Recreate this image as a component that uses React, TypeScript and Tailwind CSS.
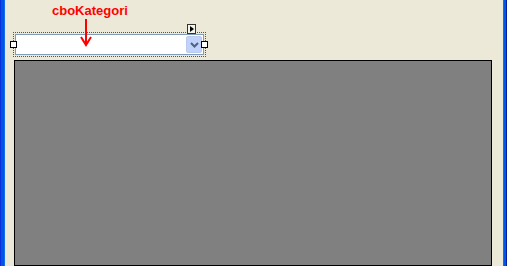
export default function App() {
  return (
    <div className="flex h-[266px] w-[507px] overflow-hidden" style={{ fontFamily: '"Liberation Sans", Arial, sans-serif' }}>
      <div className="flex h-full shrink-0">
        <div className="w-px bg-[#0831D9]" />
        <div className="w-[3px] bg-[#0055E5]" />
        <div className="w-px bg-[#166AEE]" />
      </div>
      <div className="relative flex flex-1 flex-col bg-[#ECE9D8]">
        <div className="ml-[8px] mt-[32px] relative h-[25px] w-[193px] border border-dotted border-[#555]">
          <div className="absolute left-[1px] top-[1px] h-[21px] w-[189px] border border-[#7F9DB9] bg-white">
            <div className="absolute right-[1px] top-[1px] flex h-[17px] w-[16px] items-center justify-center rounded-[2px] border border-[#B9C9EF] bg-[#C1D3FB]">
              <svg width="9" height="6" viewBox="0 0 9 6">
                <path d="M1 1 L4.5 4.5 L8 1" stroke="#4D6185" strokeWidth="2" fill="none" />
              </svg>
            </div>
          </div>
          <div className="absolute left-[-4px] top-[8px] h-[7px] w-[7px] border border-black bg-white" />
          <div className="absolute right-[-3px] top-[8px] h-[7px] w-[7px] border border-black bg-white" />
          <div className="absolute left-[173px] top-[-9px] flex h-[10px] w-[9px] items-center justify-center border border-[#333] bg-[#F5F4EA]">
            <svg width="4" height="6" viewBox="0 0 4 6">
              <path d="M0 0 L4 3 L0 6 Z" fill="black" />
            </svg>
          </div>
        </div>
        <div className="ml-[9px] mt-[3px] w-[478px] flex-1 border border-black bg-[#808080]" />
        <div className="absolute left-[47px] top-[3px] text-[13px] font-bold leading-[16px] text-[#FF0000]">cboKategori</div>
        <svg className="absolute left-[70px] top-[18px]" width="22" height="30" viewBox="0 0 22 30">
          <path d="M11 1 L11 27" stroke="#FF0000" strokeWidth="2" />
          <path d="M6 19 L11 27 L16 19" stroke="#FF0000" strokeWidth="2" fill="none" />
        </svg>
      </div>
      <div className="flex h-full shrink-0">
        <div className="w-px bg-[#166AEE]" />
        <div className="w-[2px] bg-[#0055E5]" />
        <div className="w-px bg-[#001EA0]" />
      </div>
    </div>
  );
}
